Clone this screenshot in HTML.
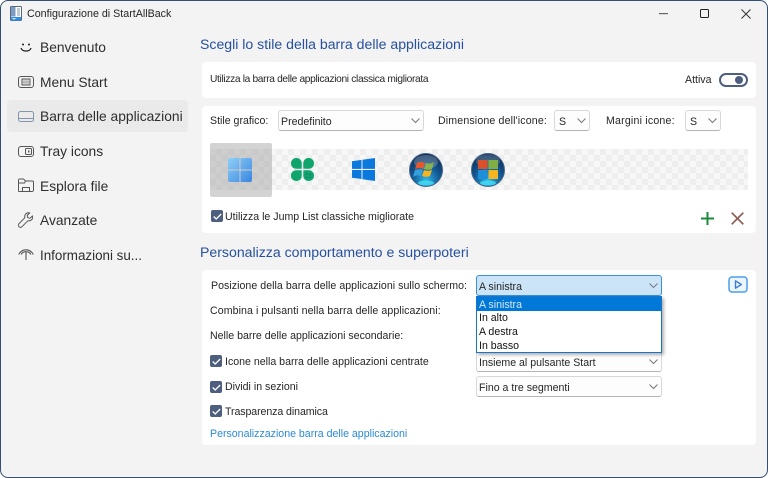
<!DOCTYPE html>
<html lang="it"><head><meta charset="utf-8"><title>Configurazione di StartAllBack</title>
<style>
html,body{margin:0;padding:0;width:768px;height:478px;overflow:hidden;background:#fff}
body{font-family:"Liberation Sans",sans-serif;color:#1b1b1b;position:relative}
#win{position:absolute;left:0;top:0;width:766px;height:476px;background:#f3f3f3;border:1px solid #34506f;border-bottom-width:1px;border-radius:8px;overflow:hidden;filter:blur(.3px)}
.a{position:absolute;white-space:nowrap}
.abs{position:absolute;left:-1px;top:-1px;width:768px;height:478px}
.card{position:absolute;background:#fff;border-radius:4px}
.nav{position:absolute;left:40px;font-size:13.8px;line-height:18px;color:#2e2e2e;white-space:nowrap}
.t{position:absolute;font-size:10.6px;line-height:14px;color:#262626;white-space:nowrap}
.h{position:absolute;font-size:14.1px;line-height:18px;color:#27509f;white-space:nowrap}
.sel{position:absolute;background:#fdfdfd;border:1px solid #d8d8d8;border-bottom-color:#b4b4b4;border-radius:3px;box-sizing:border-box;font-size:10.6px;line-height:14px;color:#262626;padding:4px 0 0 2px;white-space:nowrap}
.sel svg{position:absolute;right:3px;top:7px}
.cb{position:absolute;width:12px;height:12px;background:#4d5e7e;border-radius:2px}
svg{display:block}
svg.i{position:absolute}
</style></head><body>
<div id="win"><div class="abs">

<svg class="i" style="left:10px;top:6px" width="12" height="15" viewBox="0 0 12 15"><rect x=".5" y=".5" width="11" height="14" rx="1" fill="#fff" stroke="#556880"/><rect x="1" y="1" width="4.500" height="9.500" fill="#7d9cc0"/><path d="M7 3h3M7 5h3M7 7h3M7 9h3" stroke="#8a96a6"/><rect x="1" y="11" width="10" height="3.500" fill="#2f8fe8"/><rect x="2.500" y="12.200" width="3" height="1" fill="#fff"/></svg>
<div class="a" style="left:27px;top:7px;font-size:10.7px;line-height:14px;color:#262626">Configurazione di StartAllBack</div>

<svg class="i" style="left:659px;top:13px" width="10" height="2"><rect width="9" height="1.200" fill="#666"/></svg>
<svg class="i" style="left:700px;top:9px" width="10" height="10"><rect x=".5" y=".5" width="8" height="8" rx="1" fill="none" stroke="#222"/></svg>
<svg class="i" style="left:741px;top:9px" width="11" height="10"><path d="M.5.500l9 9M9.500.500l-9 9" stroke="#333" fill="none"/></svg>

<div class="a" style="left:7px;top:100px;width:181px;height:32px;background:#eaeaea;border-radius:4px"></div>

<svg class="i" style="left:20px;top:43px" width="12" height="10" viewBox="0 0 12 10"><circle cx="3" cy="1.500" r="1" fill="#222"/><circle cx="9" cy="1.500" r="1" fill="#222"/><path d="M1 5c1 4 9 4 10 0" fill="none" stroke="#222" stroke-width="1.300"/></svg>
<div class="nav" style="top:39px">Benvenuto</div>

<svg class="i" style="left:18px;top:76px" width="16" height="12" viewBox="0 0 16 12"><rect x=".5" y=".5" width="15" height="11" rx="2.500" fill="none" stroke="#555"/><rect x="4" y="3" width="8" height="6" fill="none" stroke="#555"/><path d="M6 3v6M8 3v6M10 3v6M4 6h8" stroke="#777" stroke-width=".6"/></svg>
<div class="nav" style="top:74px">Menu Start</div>

<svg class="i" style="left:18px;top:111px" width="16" height="11" viewBox="0 0 16 11"><rect x=".5" y=".5" width="15" height="10" rx="2" fill="none" stroke="#8494ad"/><path d="M1 7.500h14" stroke="#8494ad"/></svg>
<div class="nav" style="top:108px">Barra delle applicazioni</div>

<svg class="i" style="left:18px;top:146px" width="16" height="11" viewBox="0 0 16 11"><rect x=".5" y=".5" width="15" height="10" rx="2.500" fill="none" stroke="#555"/><rect x="7.500" y="2.500" width="6" height="6" rx="1" fill="none" stroke="#555"/><rect x="10" y="4.500" width="1.500" height="2" fill="#555"/></svg>
<div class="nav" style="top:143px">Tray icons</div>

<svg class="i" style="left:18px;top:178px" width="16" height="14" viewBox="0 0 16 14"><path d="M.5 12V2a1 1 0 0 1 1-1h4l2 2h7a1 1 0 0 1 1 1v8a1.500 1.500 0 0 1-1.500 1.500h-13A1 1 0 0 1 .5 12zM.5 5h6l1-2" fill="none" stroke="#555"/><path d="M4.500 13V9.500h7V13" fill="none" stroke="#555"/></svg>
<div class="nav" style="top:178px">Esplora file</div>

<svg class="i" style="left:18px;top:212px" width="15" height="16" viewBox="0 0 15 16"><path d="M10.500.700a3.800 3.800 0 0 0-3.600 5L1 11.700a2.100 2.100 0 0 0 3 3l6-6a3.800 3.800 0 0 0 4.600-4.800L12 6.300 9.800 5.700 9.200 3.400 11.700.900a3.800 3.800 0 0 0-1.200-.2z" fill="none" stroke="#555" stroke-linejoin="round"/></svg>
<div class="nav" style="top:212px">Avanzate</div>

<svg class="i" style="left:18px;top:249px" width="16" height="11" viewBox="0 0 16 11"><path d="M8 2.500V11M.7 5.500C2.500 2 5 .8 8 .8s5.500 1.200 7.300 4.700M3.200 5.500C4 3.500 6 2.700 8 2.700s4 .8 4.800 2.800" fill="none" stroke="#555" stroke-width="1.100"/></svg>
<div class="nav" style="top:247px;font-size:13.4px">Informazioni su...</div>

<div class="h" style="left:200px;top:35px">Scegli lo stile della barra delle applicazioni</div>

<div class="card" style="left:202px;top:62px;width:554px;height:36px"></div>
<div class="t" style="left:210px;top:73px;font-size:10.2px;letter-spacing:-.33px">Utilizza la barra delle applicazioni classica migliorata</div>
<div class="t" style="left:685px;top:73px">Attiva</div>
<div class="a" style="left:719px;top:73px;width:25px;height:10px;border:2px solid #4d5e7e;border-radius:7px;background:#fff"></div>
<div class="a" style="left:735px;top:76px;width:8px;height:8px;border-radius:50%;background:#4d5e7e"></div>

<div class="card" style="left:202px;top:106px;width:554px;height:127px"></div>
<div class="t" style="left:210px;top:114px">Stile grafico:</div>
<div class="sel" style="left:278px;top:110px;width:146px;height:21px">Predefinito<svg width="9" height="6"><path d="M.5.500l4 4 4-4" fill="none" stroke="#777"/></svg></div>
<div class="t" style="left:438px;top:114px;letter-spacing:.15px">Dimensione dell'icone:</div>
<div class="sel" style="left:554px;top:110px;width:36px;height:21px;padding-left:4px">S<svg width="9" height="6"><path d="M.5.500l4 4 4-4" fill="none" stroke="#777"/></svg></div>
<div class="t" style="left:606px;top:114px;letter-spacing:.2px">Margini icone:</div>
<div class="sel" style="left:685px;top:110px;width:36px;height:21px;padding-left:4px">S<svg width="9" height="6"><path d="M.5.500l4 4 4-4" fill="none" stroke="#777"/></svg></div>

<div class="a" style="left:210px;top:149px;width:538px;height:41px;background-color:#f7f7f7;background-image:linear-gradient(45deg,#eeeeee 25%,transparent 25%,transparent 75%,#eeeeee 75%),linear-gradient(45deg,#eeeeee 25%,transparent 25%,transparent 75%,#eeeeee 75%);background-size:12px 12px;background-position:0 0,6px 6px"></div>
<div class="a" style="left:210px;top:143px;width:62px;height:54px;background:rgba(150,150,150,.42);border-radius:2px"></div>

<svg class="i" style="left:228px;top:158px" width="24" height="24" viewBox="0 0 24 24"><defs><linearGradient id="w" x1="0" y1="0" x2="1" y2="1"><stop offset="0" stop-color="#8fd0f8"/><stop offset="1" stop-color="#3a86e0"/></linearGradient></defs><path d="M2 0h9.500v11.500H0V2a2 2 0 0 1 2-2zM12.500 0H22a2 2 0 0 1 2 2v9.500H12.500zM0 12.500h11.500V24H2a2 2 0 0 1-2-2zM12.500 12.500H24V22a2 2 0 0 1-2 2h-9.500z" fill="url(#w)"/></svg>

<svg class="i" style="left:291px;top:158px" width="23" height="23" viewBox="0 0 23 23"><defs><path id="lf" d="M10.700 10.700H5A5 5 0 0 1 0 5.700V5A5 5 0 0 1 5 0h.7a5 5 0 0 1 5 5z" fill="#0fa56c"/></defs><use href="#lf"/><use href="#lf" transform="matrix(-1 0 0 1 23 0)"/><use href="#lf" transform="matrix(1 0 0 -1 0 23)"/><use href="#lf" transform="matrix(-1 0 0 -1 23 23)"/><g fill="#1d6d80"><circle cx="15.500" cy="16" r=".8"/><circle cx="19" cy="16.500" r=".8"/><circle cx="16" cy="19.500" r=".8"/><circle cx="19" cy="19.500" r=".8"/></g></svg>

<svg class="i" style="left:352px;top:158px" width="23" height="23" viewBox="0 0 23 23"><path d="M0 3.200l9.500-1.300v9H0zM10.500 1.700L23 0v10.900H10.500zM0 12h9.500v9L0 19.800zM10.500 12H23v11l-12.500-1.700z" fill="#0a78dc"/></svg>

<svg class="i" style="left:409px;top:153px" width="34" height="34" viewBox="0 0 34 34"><defs><radialGradient id="o" cx=".5" cy=".8" r=".8"><stop offset="0" stop-color="#2fb6e8"/><stop offset=".5" stop-color="#135a96"/><stop offset="1" stop-color="#10284c"/></radialGradient></defs><circle cx="17" cy="17" r="16.500" fill="url(#o)" stroke="#44648a"/><ellipse cx="17" cy="9" rx="12" ry="7" fill="#fff" opacity=".22"/><path d="M8 10c3-2 5-1 8 0l-2 6c-2-1-5-1-8 0z" fill="#e8572a"/><path d="M17 10c3 1 5 1 8-1l-2 7c-2 1-5 1-8 0z" fill="#8cb24a"/><path d="M6 17c3-1 5-1 8 0l-2 6c-3-1-5-1-8 1z" fill="#33a0dc"/><path d="M15 17c2 1 5 1 8 0l-2 6c-3 1-5 1-8 0z" fill="#f5b51e"/><ellipse cx="17" cy="30" rx="8" ry="2.500" fill="#45e0f5" opacity=".8"/></svg>

<svg class="i" style="left:471px;top:153px" width="34" height="34" viewBox="0 0 34 34"><circle cx="17" cy="17" r="16.500" fill="url(#o)" stroke="#44648a"/><ellipse cx="17" cy="8" rx="12" ry="6.500" fill="#fff" opacity=".18"/><rect x="7" y="7" width="9.500" height="9" fill="#d9502a"/><rect x="17.500" y="7" width="9.500" height="9" fill="#7fae44"/><rect x="7" y="17" width="9.500" height="9" fill="#1f8ed8"/><rect x="17.500" y="17" width="9.500" height="9" fill="#f5b51e"/><ellipse cx="17" cy="30" rx="8" ry="2.500" fill="#45e0f5" opacity=".8"/></svg>

<div class="cb" style="left:211px;top:210px"></div>
<svg class="i" style="left:213px;top:213px" width="9" height="7"><path d="M.7 3.500l2.500 2.500 5-5" fill="none" stroke="#fff" stroke-width="1.300"/></svg>
<div class="t" style="left:225px;top:210px">Utilizza le Jump List classiche migliorate</div>

<svg class="i" style="left:701px;top:212px" width="13" height="13"><path d="M6.500 0v13M0 6.500h13" stroke="#1c8a3a" stroke-width="2"/></svg>
<svg class="i" style="left:731px;top:212px" width="13" height="13"><path d="M.7.700l11.600 11.600M12.300.700L.7 12.300" stroke="#8e5a50" stroke-width="1.700"/></svg>

<div class="h" style="left:200px;top:243px">Personalizza comportamento e superpoteri</div>

<div class="card" style="left:202px;top:270px;width:554px;height:175px"></div>
<div class="t" style="left:211px;top:279px;letter-spacing:.04px">Posizione della barra delle applicazioni sullo schermo:</div>
<div class="t" style="left:210px;top:304px;letter-spacing:.08px">Combina i pulsanti nella barra delle applicazioni:</div>
<div class="t" style="left:210px;top:329px">Nelle barre delle applicazioni secondarie:</div>

<div class="cb" style="left:210px;top:355px"></div>
<svg class="i" style="left:212px;top:358px" width="9" height="7"><path d="M.7 3.500l2.500 2.500 5-5" fill="none" stroke="#fff" stroke-width="1.300"/></svg>
<div class="t" style="left:225px;top:355px">Icone nella barra delle applicazioni centrate</div>

<div class="cb" style="left:210px;top:381px"></div>
<svg class="i" style="left:212px;top:384px" width="9" height="7"><path d="M.7 3.500l2.500 2.500 5-5" fill="none" stroke="#fff" stroke-width="1.300"/></svg>
<div class="t" style="left:225px;top:380px">Dividi in sezioni</div>

<div class="cb" style="left:210px;top:405px"></div>
<svg class="i" style="left:212px;top:408px" width="9" height="7"><path d="M.7 3.500l2.500 2.500 5-5" fill="none" stroke="#fff" stroke-width="1.300"/></svg>
<div class="t" style="left:225px;top:405px;letter-spacing:-.08px">Trasparenza dinamica</div>

<div class="t" style="left:210px;top:427px;color:#2a8ad8">Personalizzazione barra delle applicazioni</div>

<div class="sel" style="left:476px;top:275px;width:186px;height:21px;background:#cbe4f8;border-color:#3c8fdc">A sinistra<svg width="9" height="6"><path d="M.5.500l4 4 4-4" fill="none" stroke="#778"/></svg></div>
<div class="sel" style="left:476px;top:351px;width:186px;height:21px">Insieme al pulsante Start<svg width="9" height="6"><path d="M.5.500l4 4 4-4" fill="none" stroke="#777"/></svg></div>
<div class="sel" style="left:476px;top:376px;width:186px;height:21px">Fino a tre segmenti<svg width="9" height="6"><path d="M.5.500l4 4 4-4" fill="none" stroke="#777"/></svg></div>

<div class="a" style="left:476px;top:296px;width:184px;height:55px;background:#fff;border:1px solid #1a74c8;box-shadow:2px 2px 3px rgba(0,0,0,.3)">
<div style="background:#0078d7;color:#d8e8f8;height:14px;font-size:10.6px;line-height:16px;padding-left:2px;overflow:hidden">A sinistra</div>
<div style="height:14px;font-size:10.6px;line-height:15px;padding-left:2px;color:#111">In alto</div>
<div style="height:13.500px;font-size:10.6px;line-height:15px;padding-left:2px;color:#111">A destra</div>
<div style="height:13.500px;font-size:10.6px;line-height:15px;padding-left:2px;color:#111">In basso</div>
</div>

<svg class="i" style="left:728px;top:276px" width="20" height="17" viewBox="0 0 20 17"><rect x="1" y="1" width="18" height="15" rx="3" fill="#eef6fd" stroke="#4a9fe6" stroke-width="1.500"/><path d="M7.500 4.800v7.400l5.800-3.700z" fill="none" stroke="#3a7fd0" stroke-width="1.400" stroke-linejoin="round"/></svg>

</div></div>
</body></html>
